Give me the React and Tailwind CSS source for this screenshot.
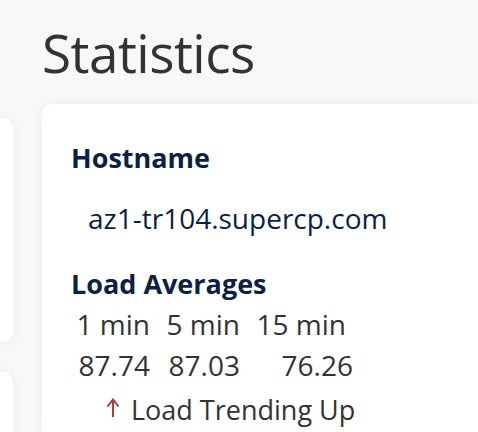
const loads = [
  { label: '1 min', value: '87.74', w: 'w-[79px]', pr: 'pr-0' },
  { label: '5 min', value: '87.03', w: 'w-[90px]', pr: 'pr-0' },
  { label: '15 min', value: '76.26', w: 'w-[113px]', pr: 'pr-[7px]' },
];

const App = () => {
  return (
    <div className="w-[478px] h-[432px] overflow-hidden bg-[#f8f8f8] font-['Open_Sans',sans-serif] flex">
      <div className="w-[42px] shrink-0 flex flex-col pt-[118px] gap-[30px] pr-[29px]">
        <div className="h-[224px] shrink-0 bg-white rounded-r-[10px] shadow-[0_0_12px_rgba(0,0,0,0.06)]" />
        <div className="h-[200px] shrink-0 bg-white rounded-tr-[10px] shadow-[0_0_12px_rgba(0,0,0,0.06)]" />
      </div>
      <div className="flex-1 flex flex-col">
        <h1 className="text-[53px] leading-none text-[#333333] mt-[26px] tracking-[-0.5px]">Statistics</h1>
        <div className="mt-[25px] flex-1 bg-white rounded-tl-[10px] shadow-[0_0_12px_rgba(0,0,0,0.06)] pl-[29px] pt-[36px] text-[28px]">
          <h2 className="font-bold text-[#0c1f45] text-[27px] leading-[36px]">Hostname</h2>
          <p className="text-[#0c1f45] leading-[36px] mt-[24px] ml-[17px]">az1-tr104.supercp.com</p>
          <h2 className="font-bold text-[#0c1f45] text-[27px] leading-[36px] mt-[30px]">Load Averages</h2>
          <div className="flex text-[#333333] leading-[36px] mt-[4px]">
            {loads.map((l) => (
              <span key={l.label} className={`${l.w} ${l.pr} text-right whitespace-nowrap`}>{l.label}</span>
            ))}
          </div>
          <div className="flex text-[#333333] leading-[36px] mt-[5px]">
            {loads.map((l) => (
              <span key={l.label} className={`${l.w} text-right`}>{l.value}</span>
            ))}
          </div>
          <div className="flex items-center text-[#333333] text-[27px] leading-[36px] mt-[9px] ml-[35px]">
            <svg width="14" height="19" viewBox="0 0 14 19" className="mr-[11px] mt-[-5px]">
              <path d="M7 19V1.5M1.5 8.5L7 1.5L12.5 8.5" fill="none" stroke="#b03c3c" strokeWidth="2" />
            </svg>
            <span>Load Trending Up</span>
          </div>
        </div>
      </div>
    </div>
  );
};

export default App;
